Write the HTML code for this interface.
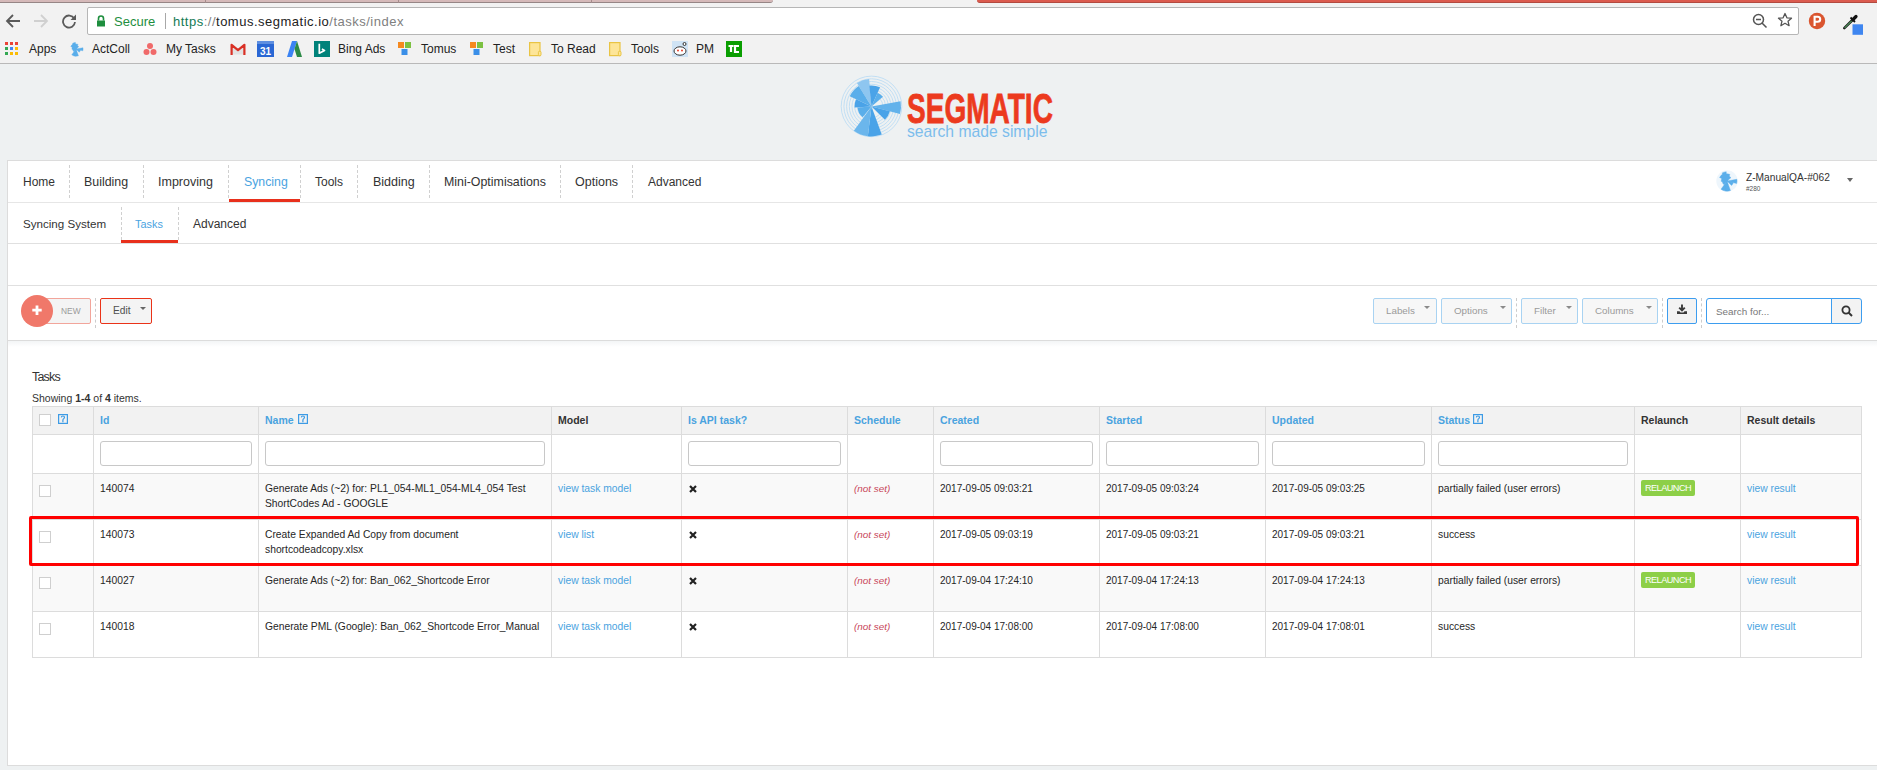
<!DOCTYPE html>
<html><head><meta charset="utf-8">
<style>
*{box-sizing:border-box;margin:0;padding:0}
html,body{width:1877px;height:770px;overflow:hidden}
body{position:relative;background:#eef1f2;font-family:"Liberation Sans",sans-serif;color:#333}
.a{position:absolute;white-space:nowrap}
#chrome{position:absolute;left:0;top:0;width:1877px;height:64px;background:#f2f2f2;border-bottom:1px solid #b9b9b9}
.tabp{position:absolute;top:0;height:3px;background:#d5b9b9;border-bottom:1px solid #968686}
#addr{position:absolute;left:87px;top:7px;width:1712px;height:28px;background:#fff;border:1px solid #b6b6b6;border-radius:2px}
.bm{position:absolute;top:41px;font-size:12px;color:#222;line-height:16px;white-space:nowrap}
#panel{position:absolute;left:7px;top:160px;width:1870px;height:606px;background:#fff;border:1px solid #dcdcdc;border-right:none}
.nav{position:absolute;font-size:12px;color:#333;line-height:14px;white-space:nowrap}
.sep{position:absolute;width:0;border-left:1px dashed #d0d0d0}
.hl{position:absolute;height:1px;background:#e3e3e3}
.tbtn{position:absolute;top:298px;height:26px;border:1px solid #a9d3f2;border-radius:2px;background:#f7f7f7;font-size:9.8px;color:#9a9a9a;line-height:24px;white-space:nowrap}
.caret{position:absolute;width:0;height:0;border-left:3px solid transparent;border-right:3px solid transparent;border-top:3px solid #8a8a8a}
.vb{position:absolute;top:406px;width:1px;height:252px;background:#dcdcdc}
.hb{position:absolute;left:32px;width:1830px;height:1px;background:#dcdcdc}
.th{position:absolute;top:413px;font-size:10.5px;font-weight:bold;color:#4aa3df;line-height:14px;white-space:nowrap}
.thd{color:#333}
.fin{position:absolute;top:441px;height:25px;border:1px solid #c8c8c8;border-radius:3px;background:#fff}
.td{position:absolute;font-size:10.3px;color:#262626;line-height:14.5px;white-space:nowrap}
.lnk{color:#4aa3df}
.ns{color:#c9475a;font-style:italic;font-size:9.9px}
.cb{position:absolute;left:39px;width:12px;height:12px;border:1px solid #cfcfcf;background:#fff}
.badge{position:absolute;left:1641px;width:54px;height:16px;background:#8dcf48;border-radius:2px;color:#fff;font-size:9.2px;font-weight:normal;line-height:17px;text-align:center;letter-spacing:-0.55px}
.xi{position:absolute;left:689px;width:8px;height:8px}
</style></head><body>
<div id="chrome">
  <div class="tabp" style="left:0;width:773px;border-radius:0 0 3px 0"></div>
  <div class="a" style="left:205px;top:0;width:1px;height:3px;background:#a48c8c"></div>
  <div class="a" style="left:398px;top:0;width:1px;height:3px;background:#a48c8c"></div>
  <div class="a" style="left:591px;top:0;width:1px;height:3px;background:#a48c8c"></div>
  <div class="tabp" style="left:977px;width:900px;background:#db5b4f;border-bottom-color:#b24a40;border-radius:0 0 0 3px"></div>
  <!-- nav icons -->
  <svg class="a" style="left:5px;top:13px" width="16" height="16" viewBox="0 0 16 16"><path d="M15 8H2M8 2L2 8l6 6" fill="none" stroke="#5a5a5a" stroke-width="1.8"/></svg>
  <svg class="a" style="left:33px;top:13px" width="16" height="16" viewBox="0 0 16 16"><path d="M1 8h13M8 2l6 6-6 6" fill="none" stroke="#d0d0d0" stroke-width="1.8"/></svg>
  <svg class="a" style="left:61px;top:13px" width="16" height="16" viewBox="0 0 16 16"><path d="M13.2 5.5A6 6 0 1 0 14 9" fill="none" stroke="#5a5a5a" stroke-width="1.8"/><path d="M15 1.5V7H9.5z" fill="#5a5a5a"/></svg>
  <div id="addr"></div>
  <svg class="a" style="left:96px;top:15px" width="10" height="12" viewBox="0 0 10 12"><path d="M2.5 5.5V3.5a2.5 2.5 0 0 1 5 0v2" fill="none" stroke="#1e8e3e" stroke-width="1.6"/><rect x="1" y="5.5" width="8" height="6" fill="#1e8e3e"/></svg>
  <div class="a" style="left:114px;top:13px;font-size:13px;line-height:17px;color:#1e8e3e">Secure</div>
  <div class="a" style="left:165px;top:13px;width:1px;height:16px;background:#a8a8a8"></div>
  <div class="a" style="left:173px;top:13px;font-size:13px;letter-spacing:0.5px;line-height:17px;color:#808080"><span style="color:#137a55">https</span>://<span style="color:#222">tomus.segmatic.io</span>/tasks/index</div>
  <svg class="a" style="left:1752px;top:13px" width="16" height="16" viewBox="0 0 16 16"><circle cx="6.5" cy="6.5" r="5" fill="none" stroke="#555" stroke-width="1.5"/><path d="M10 10l4.5 4.5M4 6.5h5" stroke="#555" stroke-width="1.5"/></svg>
  <svg class="a" style="left:1777px;top:12px" width="16" height="16" viewBox="0 0 16 16"><path d="M8 1.5l1.9 4.3 4.6.4-3.5 3 1.1 4.5L8 11.3l-4.1 2.4L5 9.2l-3.5-3 4.6-.4z" fill="none" stroke="#555" stroke-width="1.3" stroke-linejoin="round"/></svg>
  <svg class="a" style="left:1808px;top:12px" width="18" height="18" viewBox="0 0 18 18"><circle cx="9" cy="9" r="8.2" fill="#da552f"/><path d="M6.6 14V4.7h3.1a2.5 2.5 0 0 1 0 5H6.6" fill="none" stroke="#fff" stroke-width="2.1"/></svg>
  <svg class="a" style="left:1842px;top:12px" width="22" height="24" viewBox="0 0 22 24"><path d="M2.3 16.2L10 8.5" stroke="#1d1d1d" stroke-width="2.6" stroke-linecap="round"/><path d="M2.6 15.9L9.7 8.8" stroke="#4f9a5e" stroke-width="1.1"/><path d="M8.5 5.5l4.5 4.5" stroke="#111" stroke-width="1.8"/><path d="M11 7.5l3-3" stroke="#111" stroke-width="3.2" stroke-linecap="round"/><rect x="10.5" y="12.3" width="10.5" height="10.5" fill="#3f86f0"/></svg>
  <!-- bookmarks -->
  <svg class="a" style="left:5px;top:42px" width="14" height="14" viewBox="0 0 14 14"><rect x="0" y="0" width="3" height="3" fill="#ea4335"/><rect x="5" y="0" width="3" height="3" fill="#ea4335"/><rect x="10" y="0" width="3" height="3" fill="#ea4335"/><rect x="0" y="5" width="3" height="3" fill="#34a853"/><rect x="5" y="5" width="3" height="3" fill="#4285f4"/><rect x="10" y="5" width="3" height="3" fill="#fbbc05"/><rect x="0" y="10" width="3" height="3" fill="#34a853"/><rect x="5" y="10" width="3" height="3" fill="#fbbc05"/><rect x="10" y="10" width="3" height="3" fill="#fbbc05"/></svg>
  <div class="bm" style="left:29px">Apps</div>
  <svg class="a" style="left:68px;top:41px" width="16" height="16" viewBox="0 0 16 16"><path d="M8.00 8.00L4.50 2.40A6.60 6.60 0 0 1 7.42 1.43zM8.00 8.00L7.47 2.99A5.04 5.04 0 0 1 10.05 3.40zM8.00 8.00L9.46 4.71A3.60 3.60 0 0 1 10.76 5.69zM8.00 8.00L14.97 6.77A7.08 7.08 0 0 1 14.84 9.83zM8.00 8.00L12.40 9.18A4.56 4.56 0 0 1 11.22 11.22zM8.00 8.00L10.46 14.77A7.20 7.20 0 0 1 7.12 15.15zM8.00 8.00L7.12 15.15A7.20 7.20 0 0 1 3.77 13.82zM8.00 8.00L5.89 10.61A3.36 3.36 0 0 1 4.65 8.23zM8.00 8.00L3.93 8.28A4.08 4.08 0 0 1 4.30 6.28zM8.00 8.00L2.78 5.57A5.76 5.76 0 0 1 4.95 3.12z" fill="#5aaeea" stroke="#5aaeea" stroke-width="0.4"/></svg>
  <div class="bm" style="left:92px">ActColl</div>
  <svg class="a" style="left:143px;top:42px" width="14" height="14" viewBox="0 0 14 14"><circle cx="7" cy="4" r="3" fill="#f06a6a"/><circle cx="3.5" cy="10" r="3" fill="#f06a6a"/><circle cx="10.5" cy="10" r="3" fill="#f06a6a"/></svg>
  <div class="bm" style="left:166px">My Tasks</div>
  <svg class="a" style="left:230px;top:43px" width="16" height="12" viewBox="0 0 16 12"><path d="M2 11.5V3L8 8l6-5v8.5z" fill="#e2e2e2"/><path d="M1.6 12V1.8L8 7.2l6.4-5.4V12" fill="none" stroke="#d93025" stroke-width="2.2" stroke-linejoin="round"/></svg>
  <svg class="a" style="left:257px;top:41px" width="17" height="16" viewBox="0 0 17 16"><rect x="0" y="1" width="17" height="15" fill="#2a67d4"/><rect x="0" y="0" width="17" height="3" fill="#5f8fe0"/><text x="8.5" y="14" font-size="10" font-weight="bold" fill="#fff" text-anchor="middle" font-family="Liberation Sans">31</text></svg>
  <svg class="a" style="left:286px;top:41px" width="17" height="16" viewBox="0 0 17 16"><path d="M6 0h5l-5 16H1z" fill="#3b83f3"/><path d="M11 0l5 16h-5L8.5 8z" fill="#2c8a46"/></svg>
  <svg class="a" style="left:314px;top:41px" width="16" height="16" viewBox="0 0 16 16"><rect width="16" height="16" fill="#00827a"/><path d="M5.3 2.8v9.4l5.2-2.8-2.6-1.3" fill="none" stroke="#fff" stroke-width="1.7" stroke-linejoin="round"/></svg>
  <div class="bm" style="left:338px">Bing Ads</div>
  <svg class="a" style="left:398px;top:42px" width="14" height="14" viewBox="0 0 14 14"><rect x="0" y="0" width="6" height="6" fill="#f5891f"/><rect x="7" y="0" width="6" height="6" fill="#7cc142"/><rect x="3.5" y="7" width="6" height="6" fill="#3b8fe8"/></svg>
  <div class="bm" style="left:421px">Tomus</div>
  <svg class="a" style="left:470px;top:42px" width="14" height="14" viewBox="0 0 14 14"><rect x="0" y="0" width="6" height="6" fill="#f5891f"/><rect x="7" y="0" width="6" height="6" fill="#7cc142"/><rect x="3.5" y="7" width="6" height="6" fill="#3b8fe8"/></svg>
  <div class="bm" style="left:493px">Test</div>
  <svg class="a" style="left:529px;top:42px" width="13" height="15" viewBox="0 0 13 15"><rect x="0.6" y="0.6" width="10.4" height="13" fill="#fde598" stroke="#e9c444" stroke-width="1.2"/><rect x="9.4" y="9.3" width="2.6" height="4.4" rx="1" fill="#fde598" stroke="#e9c444"/></svg>
  <div class="bm" style="left:551px">To Read</div>
  <svg class="a" style="left:609px;top:42px" width="13" height="15" viewBox="0 0 13 15"><rect x="0.6" y="0.6" width="10.4" height="13" fill="#fde598" stroke="#e9c444" stroke-width="1.2"/><rect x="9.4" y="9.3" width="2.6" height="4.4" rx="1" fill="#fde598" stroke="#e9c444"/></svg>
  <div class="bm" style="left:631px">Tools</div>
  <svg class="a" style="left:672px;top:41px" width="16" height="16" viewBox="0 0 16 16"><rect width="16" height="16" fill="#cfe3f5"/><ellipse cx="8" cy="10" rx="6" ry="4.2" fill="#fff" stroke="#333" stroke-width="1"/><circle cx="6" cy="9.5" r="1" fill="#e8402a"/><circle cx="10" cy="9.5" r="1" fill="#e8402a"/><circle cx="12.5" cy="3" r="1.5" fill="#fff" stroke="#333"/></svg>
  <div class="bm" style="left:696px">PM</div>
  <svg class="a" style="left:726px;top:41px" width="16" height="16" viewBox="0 0 16 16"><rect width="16" height="16" fill="#0a9e01"/><path d="M2.5 5h5M5 5v6M13 5H9v6h4" fill="none" stroke="#fff" stroke-width="2.2"/></svg>
</div>

<!-- logo -->
<svg class="a" style="left:838px;top:74px" width="66" height="66" viewBox="0 0 66 66"><g fill="none" stroke="#bcdcf4" stroke-width="0.9"><circle cx="33.5" cy="32.4" r="30.3"/><circle cx="33.5" cy="32.4" r="27.6"/><circle cx="33.5" cy="32.4" r="24.9"/><circle cx="33.5" cy="32.4" r="22.2"/><circle cx="33.5" cy="32.4" r="19.5"/><circle cx="33.5" cy="32.4" r="16.8"/><circle cx="33.5" cy="32.4" r="14.1"/><circle cx="33.5" cy="32.4" r="11.4"/></g><path d="M33.5 32.4L18.93 9.08A27.5 27.5 0 0 1 31.10 5.00z" fill="#8ec6f0"/><path d="M33.5 32.4L31.30 11.52A21 21 0 0 1 42.04 13.22z" fill="#4aa3e8"/><path d="M33.5 32.4L39.60 18.70A15 15 0 0 1 44.99 22.76z" fill="#5aaeea"/><path d="M33.5 32.4L62.55 27.28A29.5 29.5 0 0 1 61.99 40.04z" fill="#62b2eb"/><path d="M33.5 32.4L51.85 37.32A19 19 0 0 1 46.94 45.84z" fill="#4aa3e8"/><path d="M33.5 32.4L43.76 60.59A30 30 0 0 1 29.84 62.18z" fill="#4aa3e8"/><path d="M33.5 32.4L29.84 62.18A30 30 0 0 1 15.87 56.67z" fill="#6bb6ec"/><path d="M33.5 32.4L24.69 43.28A14 14 0 0 1 19.53 33.38z" fill="#5aaeea"/><path d="M33.5 32.4L16.54 33.59A17 17 0 0 1 18.09 25.22z" fill="#4aa3e8"/><path d="M33.5 32.4L11.75 22.26A24 24 0 0 1 20.78 12.05z" fill="#5aaeea"/></svg>
<div class="a" style="left:907px;top:84px;font-size:43px;line-height:48px;font-weight:bold;color:#ec3a1e;-webkit-text-stroke:0.8px #ec3a1e;transform:scaleX(0.652);transform-origin:0 0">SEGMATIC</div>
<div class="a" style="left:907px;top:123px;font-size:15.7px;line-height:18px;color:#7cbdec">search made simple</div>

<div id="panel"></div>
<!-- main nav -->
<div class="hl" style="left:8px;top:202px;width:1869px;background:#e6e6e6"></div>
<div class="hl" style="left:8px;top:243px;width:1869px;background:#e0e0e0"></div>
<div class="nav" style="left:23px;top:175px">Home</div>
<div class="sep" style="left:69px;top:165px;height:33px"></div>
<div class="nav" style="left:84px;top:175px;font-size:12.4px">Building</div>
<div class="sep" style="left:143px;top:165px;height:33px"></div>
<div class="nav" style="left:158px;top:175px;font-size:12.5px">Improving</div>
<div class="sep" style="left:228px;top:165px;height:33px"></div>
<div class="nav" style="left:244px;top:175px;color:#4aa3df;font-size:12.3px">Syncing</div>
<div class="sep" style="left:300px;top:165px;height:33px"></div>
<div class="a" style="left:229px;top:199px;width:71px;height:3px;background:#e8301c"></div>
<div class="nav" style="left:315px;top:175px">Tools</div>
<div class="sep" style="left:357px;top:165px;height:33px"></div>
<div class="nav" style="left:373px;top:175px;font-size:12.5px">Bidding</div>
<div class="sep" style="left:429px;top:165px;height:33px"></div>
<div class="nav" style="left:444px;top:175px;font-size:12.4px">Mini-Optimisations</div>
<div class="sep" style="left:560px;top:165px;height:33px"></div>
<div class="nav" style="left:575px;top:175px;font-size:12.5px">Options</div>
<div class="sep" style="left:632px;top:165px;height:33px"></div>
<div class="nav" style="left:648px;top:175px">Advanced</div>
<!-- user -->
<svg class="a" style="left:1716px;top:170px" width="22" height="22" viewBox="0 0 22 22"><circle cx="11.0" cy="11.0" r="10.7" fill="#eef6fc"/><path d="M11.00 11.00L6.05 3.07A9.35 9.35 0 0 1 10.19 1.69zM11.00 11.00L10.25 3.90A7.14 7.14 0 0 1 13.90 4.48zM11.00 11.00L13.07 6.34A5.10 5.10 0 0 1 14.91 7.72zM11.00 11.00L20.88 9.26A10.03 10.03 0 0 1 20.69 13.60zM11.00 11.00L17.24 12.67A6.46 6.46 0 0 1 15.57 15.57zM11.00 11.00L14.49 20.58A10.20 10.20 0 0 1 9.76 21.12zM11.00 11.00L9.76 21.12A10.20 10.20 0 0 1 5.00 19.25zM11.00 11.00L8.00 14.70A4.76 4.76 0 0 1 6.25 11.33zM11.00 11.00L5.23 11.40A5.78 5.78 0 0 1 5.76 8.56zM11.00 11.00L3.60 7.55A8.16 8.16 0 0 1 6.68 4.08z" fill="#5aaeea" stroke="#5aaeea" stroke-width="0.4"/></svg>
<div class="a" style="left:1746px;top:172px;font-size:10.2px;line-height:12px;color:#333">Z-ManualQA-#062</div>
<div class="a" style="left:1746px;top:185px;font-size:6.5px;line-height:8px;color:#555">#280</div>
<div class="caret" style="left:1847px;top:178px;border-width:4px 3.5px 0 3.5px;border-top-color:#666"></div>
<!-- sub nav -->
<div class="nav" style="left:23px;top:217px;font-size:11.6px">Syncing System</div>
<div class="sep" style="left:121px;top:207px;height:33px"></div>
<div class="nav" style="left:135px;top:217px;color:#4aa3df;font-size:10.9px">Tasks</div>
<div class="sep" style="left:178px;top:207px;height:33px"></div>
<div class="a" style="left:121px;top:240px;width:57px;height:3px;background:#e8301c"></div>
<div class="nav" style="left:193px;top:217px">Advanced</div>

<!-- toolbar -->
<div class="hl" style="left:8px;top:285px;width:1869px;background:#e0e0e0"></div>
<div class="hl" style="left:8px;top:340px;width:1869px;background:#dcdcdc"></div>
<div class="a" style="left:8px;top:341px;width:1869px;height:6px;background:linear-gradient(#f3f5f6,#fff)"></div>
<div class="a" style="left:36px;top:298px;width:55px;height:26px;border:1px solid #f2a59b;border-radius:2px;background:#f4f4f4"></div>
<div class="a" style="left:61px;top:304px;font-size:8.4px;line-height:14px;color:#9a9a9a">NEW</div>
<svg class="a" style="left:20px;top:294px" width="34" height="34" viewBox="0 0 34 34"><circle cx="17" cy="17" r="16" fill="#f0786a"/><path d="M17 11.5v9.5M12.3 16.2h9.4" stroke="#fff" stroke-width="2.8"/></svg>
<div class="sep" style="left:95px;top:298px;height:30px;border-left-color:#ccc"></div>
<div class="a" style="left:100px;top:298px;width:52px;height:26px;border:1.5px solid #ea3318;border-radius:2px;background:#f4f4f4"></div>
<div class="a" style="left:113px;top:304px;font-size:10.2px;line-height:14px;color:#505050">Edit</div>
<div class="caret" style="left:140px;top:307px;border-top-color:#666"></div>

<div class="tbtn" style="left:1373px;width:64px;padding-left:12px">Labels</div><div class="caret" style="left:1424px;top:306px"></div>
<div class="tbtn" style="left:1441px;width:71px;padding-left:12px">Options</div><div class="caret" style="left:1500px;top:306px"></div>
<div class="sep" style="left:1516px;top:298px;height:30px;border-left-color:#ccc"></div>
<div class="tbtn" style="left:1521px;width:57px;padding-left:12px">Filter</div><div class="caret" style="left:1566px;top:306px"></div>
<div class="tbtn" style="left:1582px;width:76px;padding-left:12px">Columns</div><div class="caret" style="left:1646px;top:306px"></div>
<div class="sep" style="left:1662px;top:298px;height:30px;border-left-color:#ccc"></div>
<div class="tbtn" style="left:1667px;width:30px;border-color:#3d9def;background:#f3f3f3"></div>
<svg class="a" style="left:1676px;top:304px" width="12" height="11" viewBox="0 0 12 11"><path d="M6 0.5v5.5M3.2 3.6L6 6.4 8.8 3.6" fill="none" stroke="#3a3a3a" stroke-width="1.9"/><path d="M1 7.2h2.5l1 1.2h3l1-1.2H11V10H1z" fill="#3a3a3a"/></svg>
<div class="sep" style="left:1701px;top:298px;height:30px;border-left-color:#ccc"></div>
<div class="a" style="left:1706px;top:298px;width:127px;height:26px;border:1px solid #3d9def;border-radius:3px 0 0 3px;background:#fff"></div>
<div class="a" style="left:1716px;top:305px;font-size:9.9px;line-height:14px;color:#777">Search for...</div>
<div class="a" style="left:1831px;top:298px;width:31px;height:26px;border:1px solid #3d9def;border-radius:0 3px 3px 0;background:#f3f3f3"></div>
<svg class="a" style="left:1841px;top:305px" width="12" height="12" viewBox="0 0 12 12"><circle cx="5" cy="5" r="3.6" fill="none" stroke="#333" stroke-width="1.8"/><path d="M7.5 7.5L11 11" stroke="#333" stroke-width="2"/></svg>

<!-- table title -->
<div class="a" style="left:32px;top:370px;font-size:12.5px;letter-spacing:-0.8px;line-height:14px;color:#333">Tasks</div>
<div class="a" style="left:32px;top:392px;font-size:10.5px;line-height:13px;color:#333">Showing <b>1-4</b> of <b>4</b> items.</div>

<!-- table -->
<div class="a" style="left:32px;top:406px;width:1830px;height:28px;background:#f2f2f2"></div>
<div class="a" style="left:32px;top:473px;width:1830px;height:46px;background:#f9f9f9"></div>
<div class="a" style="left:32px;top:565px;width:1830px;height:46px;background:#f9f9f9"></div>
<div class="hb" style="top:406px"></div>
<div class="hb" style="top:434px"></div>
<div class="hb" style="top:473px"></div>
<div class="hb" style="top:519px"></div>
<div class="hb" style="top:565px"></div>
<div class="hb" style="top:611px"></div>
<div class="hb" style="top:657px"></div>
<div class="vb" style="left:32px"></div>
<div class="vb" style="left:93px"></div>
<div class="vb" style="left:258px"></div>
<div class="vb" style="left:551px"></div>
<div class="vb" style="left:681px"></div>
<div class="vb" style="left:847px"></div>
<div class="vb" style="left:933px"></div>
<div class="vb" style="left:1099px"></div>
<div class="vb" style="left:1265px"></div>
<div class="vb" style="left:1431px"></div>
<div class="vb" style="left:1634px"></div>
<div class="vb" style="left:1740px"></div>
<div class="vb" style="left:1861px"></div>

<!-- header -->
<div class="cb" style="top:414px"></div>
<svg class="a" style="left:58px;top:414px" width="10" height="10" viewBox="0 0 10 10"><rect x="0.6" y="0.6" width="8.8" height="8.8" fill="none" stroke="#3d9be5" stroke-width="1.2"/><path d="M3.3 3.4Q3.4 2 4.9 2Q6.5 2 6.5 3.3Q6.5 4.1 5.6 4.7Q4.9 5.1 4.9 6.2V8.3" fill="none" stroke="#3d9be5" stroke-width="1.2"/></svg>
<div class="th" style="left:100px">Id</div>
<div class="th" style="left:265px">Name</div>
<svg class="a" style="left:298px;top:414px" width="10" height="10" viewBox="0 0 10 10"><rect x="0.6" y="0.6" width="8.8" height="8.8" fill="none" stroke="#3d9be5" stroke-width="1.2"/><path d="M3.3 3.4Q3.4 2 4.9 2Q6.5 2 6.5 3.3Q6.5 4.1 5.6 4.7Q4.9 5.1 4.9 6.2V8.3" fill="none" stroke="#3d9be5" stroke-width="1.2"/></svg>
<div class="th thd" style="left:558px">Model</div>
<div class="th" style="left:688px">Is API task?</div>
<div class="th" style="left:854px">Schedule</div>
<div class="th" style="left:940px">Created</div>
<div class="th" style="left:1106px">Started</div>
<div class="th" style="left:1272px">Updated</div>
<div class="th" style="left:1438px">Status</div>
<svg class="a" style="left:1473px;top:414px" width="10" height="10" viewBox="0 0 10 10"><rect x="0.6" y="0.6" width="8.8" height="8.8" fill="none" stroke="#3d9be5" stroke-width="1.2"/><path d="M3.3 3.4Q3.4 2 4.9 2Q6.5 2 6.5 3.3Q6.5 4.1 5.6 4.7Q4.9 5.1 4.9 6.2V8.3" fill="none" stroke="#3d9be5" stroke-width="1.2"/></svg>
<div class="th thd" style="left:1641px">Relaunch</div>
<div class="th thd" style="left:1747px">Result details</div>

<!-- filter inputs -->
<div class="fin" style="left:100px;width:152px"></div>
<div class="fin" style="left:265px;width:280px"></div>
<div class="fin" style="left:688px;width:153px"></div>
<div class="fin" style="left:940px;width:153px"></div>
<div class="fin" style="left:1106px;width:153px"></div>
<div class="fin" style="left:1272px;width:153px"></div>
<div class="fin" style="left:1438px;width:190px"></div>

<!-- rows -->
<div class="cb" style="top:485px"></div>
<div class="td" style="left:100px;top:482px">140074</div>
<div class="td" style="left:265px;top:482px">Generate Ads (~2) for: PL1_054-ML1_054-ML4_054 Test<br>ShortCodes Ad - GOOGLE</div>
<div class="td lnk" style="left:558px;top:482px">view task model</div>
<svg class="xi" style="top:485px" viewBox="0 0 8 8"><path d="M1 1l6 6M7 1L1 7" stroke="#222" stroke-width="2.2"/></svg>
<div class="td ns" style="left:854px;top:482px">(not set)</div>
<div class="td" style="left:940px;top:482px;font-size:10px">2017-09-05 09:03:21</div>
<div class="td" style="left:1106px;top:482px;font-size:10px">2017-09-05 09:03:24</div>
<div class="td" style="left:1272px;top:482px;font-size:10px">2017-09-05 09:03:25</div>
<div class="td" style="left:1438px;top:482px">partially failed (user errors)</div>
<div class="badge" style="top:480px">RELAUNCH</div>
<div class="td lnk" style="left:1747px;top:482px">view result</div>
<div class="cb" style="top:531px"></div>
<div class="td" style="left:100px;top:528px">140073</div>
<div class="td" style="left:265px;top:528px">Create Expanded Ad Copy from document<br>shortcodeadcopy.xlsx</div>
<div class="td lnk" style="left:558px;top:528px">view list</div>
<svg class="xi" style="top:531px" viewBox="0 0 8 8"><path d="M1 1l6 6M7 1L1 7" stroke="#222" stroke-width="2.2"/></svg>
<div class="td ns" style="left:854px;top:528px">(not set)</div>
<div class="td" style="left:940px;top:528px;font-size:10px">2017-09-05 09:03:19</div>
<div class="td" style="left:1106px;top:528px;font-size:10px">2017-09-05 09:03:21</div>
<div class="td" style="left:1272px;top:528px;font-size:10px">2017-09-05 09:03:21</div>
<div class="td" style="left:1438px;top:528px">success</div>
<div class="td lnk" style="left:1747px;top:528px">view result</div>
<div class="cb" style="top:577px"></div>
<div class="td" style="left:100px;top:574px">140027</div>
<div class="td" style="left:265px;top:574px">Generate Ads (~2) for: Ban_062_Shortcode Error</div>
<div class="td lnk" style="left:558px;top:574px">view task model</div>
<svg class="xi" style="top:577px" viewBox="0 0 8 8"><path d="M1 1l6 6M7 1L1 7" stroke="#222" stroke-width="2.2"/></svg>
<div class="td ns" style="left:854px;top:574px">(not set)</div>
<div class="td" style="left:940px;top:574px;font-size:10px">2017-09-04 17:24:10</div>
<div class="td" style="left:1106px;top:574px;font-size:10px">2017-09-04 17:24:13</div>
<div class="td" style="left:1272px;top:574px;font-size:10px">2017-09-04 17:24:13</div>
<div class="td" style="left:1438px;top:574px">partially failed (user errors)</div>
<div class="badge" style="top:572px">RELAUNCH</div>
<div class="td lnk" style="left:1747px;top:574px">view result</div>
<div class="cb" style="top:623px"></div>
<div class="td" style="left:100px;top:620px">140018</div>
<div class="td" style="left:265px;top:620px">Generate PML (Google): Ban_062_Shortcode Error_Manual</div>
<div class="td lnk" style="left:558px;top:620px">view task model</div>
<svg class="xi" style="top:623px" viewBox="0 0 8 8"><path d="M1 1l6 6M7 1L1 7" stroke="#222" stroke-width="2.2"/></svg>
<div class="td ns" style="left:854px;top:620px">(not set)</div>
<div class="td" style="left:940px;top:620px;font-size:10px">2017-09-04 17:08:00</div>
<div class="td" style="left:1106px;top:620px;font-size:10px">2017-09-04 17:08:00</div>
<div class="td" style="left:1272px;top:620px;font-size:10px">2017-09-04 17:08:01</div>
<div class="td" style="left:1438px;top:620px">success</div>
<div class="td lnk" style="left:1747px;top:620px">view result</div>
<div class="a" style="left:29px;top:516px;width:1830px;height:50px;border:3px solid #f00;border-radius:2px"></div>
</body></html>
